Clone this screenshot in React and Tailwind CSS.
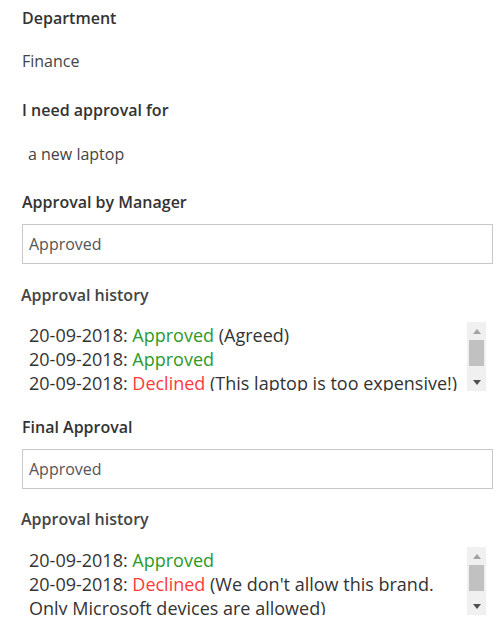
import React from "react";

const Label = ({ children, className = "" }) => (
  <div className={`h-5 leading-5 text-[16px] font-semibold text-[#333] ${className}`}>{children}</div>
);

const Field = ({ value, className = "" }) => (
  <div className={`h-10 border border-[#c8c8c8] flex items-center px-[6px] text-[16px] text-[#555] ${className}`}>
    {value}
  </div>
);

const Ok = () => <span className="text-[#2a9a2a]">Approved</span>;
const No = () => <span className="text-[#ff3a3a]">Declined</span>;

// fake scrollbar like the old browser one
const Scrollbar = () => (
  <div className="w-[19px] h-full bg-[#f0f0f0] flex flex-col items-center shrink-0">
    <div className="h-[18px] flex items-center justify-center">
      <svg width="8" height="5" viewBox="0 0 8 5"><path d="M0 5 L4 0 L8 5 Z" fill="#a3a3a3" /></svg>
    </div>
    <div className="w-[15px] h-[26px] bg-[#c1c1c1]" />
    <div className="flex-1" />
    <div className="h-[18px] flex items-center justify-center">
      <svg width="8" height="5" viewBox="0 0 8 5"><path d="M0 0 L4 5 L8 0 Z" fill="#505050" /></svg>
    </div>
  </div>
);

const History = ({ lines, className = "" }) => (
  <div className={`flex ${className}`}>
    <div className="flex-1 overflow-hidden pl-[7px] pt-[1px] text-[18px] leading-6 text-[#333]">
      {lines}
    </div>
    <div className="mr-[7px]">
      <Scrollbar />
    </div>
  </div>
);

export default function App() {
  return (
    <div className="bg-white min-h-[640px] pt-2 pl-[22px] pr-[7px] font-['Open_Sans',sans-serif]">
      <Label>Department</Label>
      <div className="mt-[23px] h-5 leading-5 text-[16px] text-[#444]">Finance</div>
      <Label className="mt-[29px]">I need approval for</Label>
      <div className="mt-[24px] h-5 leading-5 text-[16px] text-[#444] pl-[6px]">a new laptop</div>
      <Label className="mt-[28px]">Approval by Manager</Label>
      <Field value="Approved" className="mt-3" />
      <Label className="mt-[21px] -ml-[1px] text-[#444]">Approval history</Label>
      <History
        className="mt-[17px] h-[69px]"
        lines={
          <>
            <div>20-09-2018: <Ok /> (Agreed)</div>
            <div>20-09-2018: <Ok /></div>
            <div className="whitespace-nowrap">20-09-2018: <No /> (This laptop is too expensive!)</div>
          </>
        }
      />
      <Label className="mt-[26px]">Final Approval</Label>
      <Field value="Approved" className="mt-3" />
      <Label className="mt-[20px] -ml-[1px] text-[#444]">Approval history</Label>
      <History
        className="mt-[18px] h-[68px]"
        lines={
          <>
            <div>20-09-2018: <Ok /></div>
            <div>20-09-2018: <No /> (We don't allow this brand. Only Microsoft devices are allowed)</div>
          </>
        }
      />
    </div>
  );
}
